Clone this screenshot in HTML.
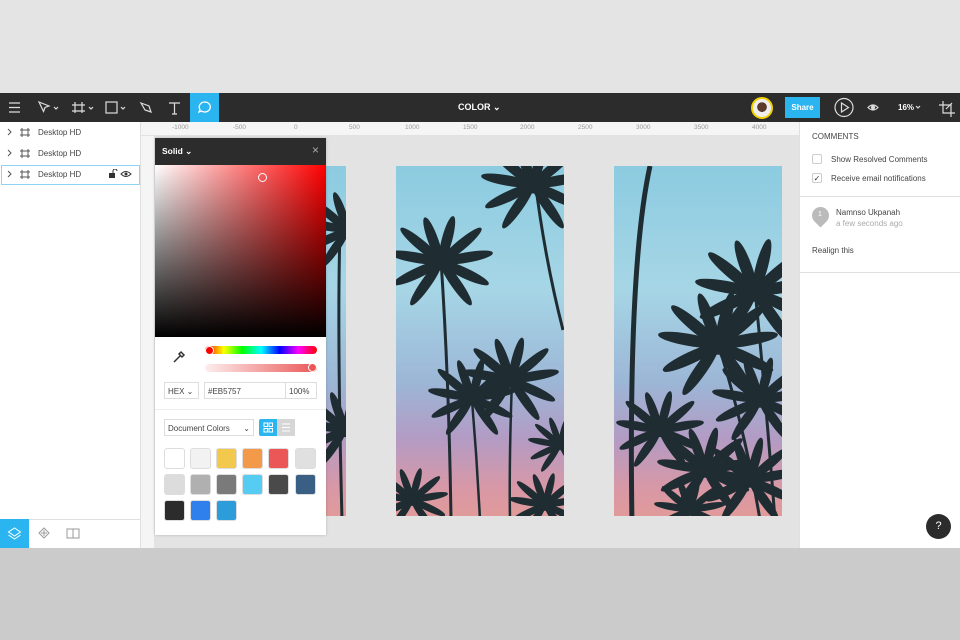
<!DOCTYPE html><html><head><style>
*{margin:0;padding:0;box-sizing:border-box}
body{width:960px;height:640px;overflow:hidden;font-family:"Liberation Sans",sans-serif;background:#e3e3e3;position:relative;font-size:8px;color:#333}
.a{position:absolute}
.photo{background:linear-gradient(180deg,#8ccbe0 0%,#a6d6e6 35%,#9cb6d6 62%,#b39bc4 78%,#d898a6 92%,#e09a9a 100%);overflow:hidden}
.swt{position:absolute;width:21px;height:21px;border-radius:3px;border:1px solid #ddd}
.t{font-size:8px;color:#444}
</style></head><body>
<div class="a" style="left:0;top:0;width:960px;height:93px;background:#e4e4e4"></div>
<div class="a" style="left:0;top:548px;width:960px;height:92px;background:#cbcbcb"></div>
<div class="a" style="left:0;top:93px;width:960px;height:29px;background:#2c2c2c"></div>
<svg class="a" style="left:0;top:93px" width="230" height="29">
<g stroke="#ddd" stroke-width="1.2" fill="none">
<path d="M9 10h11M9 14.5h11M9 19h11"/>
<path d="M39 9l10 4-4 1.5-1.5 4z"/><path d="M54 14l2 2 2-2"/>
<path d="M75 9v11M82 9v11M72 12h13M72 18h13"/><path d="M89 14l2 2 2-2"/>
<rect x="106" y="9" width="11" height="11"/><path d="M121 14l2 2 2-2"/>
<path d="M141 10l8 3 2 6-6-2z"/>
<path d="M169 10h11M174.5 10v11M172 21h5"/>
</g>
<rect x="190" y="0" width="29" height="29" fill="#2bb5f0"/>
<path d="M204.5 9a5.5 5 0 1 1-3 9l-2.5 1 1-2.5a5.5 5 0 0 1 4.5-7.5z" stroke="#fff" stroke-width="1.3" fill="none"/>
</svg>
<div class="a" style="left:458px;top:102px;color:#fff;font-size:9px;font-weight:bold">COLOR ⌄</div>
<div class="a" style="left:751px;top:97px;width:22px;height:22px;border-radius:50%;border:2px solid #f2d000;background:radial-gradient(circle at 50% 45%,#5a3a2a 35%,#eee 37%)"></div>
<div class="a" style="left:785px;top:97px;width:35px;height:21px;background:#2bb5f0;color:#fff;font-size:8px;line-height:21px;text-align:center;font-weight:bold">Share</div>
<svg class="a" style="left:830px;top:93px" width="130" height="29"><g stroke="#ddd" stroke-width="1.2" fill="none"><circle cx="14" cy="14.5" r="9"/><path d="M11.5 10v9l7-4.5z"/><path d="M38 14.5q5-5 10 0q-5 5-10 0z"/><circle cx="43" cy="14.5" r="1.5" fill="#ddd"/><path d="M86 13l2 2 2-2"/><path d="M113 8v12h12M109 12h12v12M116 16l6-6"/></g></svg>
<div class="a" style="left:898px;top:103px;color:#fff;font-size:8px;font-weight:bold">16%</div>
<div class="a" style="left:0;top:122px;width:141px;height:426px;background:#fff;border-right:1px solid #e0e0e0"></div>
<svg class="a" style="left:0;top:122px" width="40" height="70"><g stroke="#555" fill="none" stroke-width="1"><path d="M8 7l3 3-3 3M8 28l3 3-3 3M8 49l3 3-3 3"/><path d="M22 6v9M28 6v9M20 8h10M20 13h10M22 27v9M28 27v9M20 29h10M20 34h10M22 48v9M28 48v9M20 50h10M20 55h10"/></g></svg>
<div class="a t" style="left:38px;top:128px">Desktop HD</div>
<div class="a t" style="left:38px;top:149px">Desktop HD</div>
<div class="a" style="left:1px;top:165px;width:139px;height:20px;border:1px solid #8fd3f3"></div>
<div class="a t" style="left:38px;top:170px">Desktop HD</div>
<svg class="a" style="left:108px;top:169px" width="24" height="10"><rect x="1" y="4" width="6" height="5" fill="#333"/><path d="M5 4V2a2 2 0 0 1 4 0" stroke="#333" fill="none"/><path d="M13 5q5-5 10 0q-5 5-10 0z" stroke="#333" fill="none"/><circle cx="18" cy="5" r="1.5" fill="#333"/></svg>
<div class="a" style="left:0;top:519px;width:141px;height:1px;background:#e0e0e0"></div>
<div class="a" style="left:0;top:519px;width:29px;height:29px;background:#2bb5f0"></div>
<svg class="a" style="left:0;top:519px" width="90" height="29"><path d="M14.5 9l6 4-6 4-6-4z M8.5 16l6 4 6-4" stroke="#fff" fill="none"/><path d="M44 9l5 5-5 5-5-5zM41 14h6M44 11v6" stroke="#999" fill="none"/><path d="M67 10h6v9h-6zM73 10h6v9h-6" stroke="#999" fill="none"/></svg>
<div class="a" style="left:141px;top:122px;width:658px;height:14px;background:#f5f5f5;border-bottom:1px solid #e2e2e2"></div>
<div class="a" style="left:141px;top:136px;width:14px;height:412px;background:#f5f5f5;border-right:1px solid #e2e2e2"></div>
<div class="a" style="top:124px;left:0;font-size:6.5px;color:#999;width:800px">
<span class="a" style="left:172px">-1000</span><span class="a" style="left:233px">-500</span><span class="a" style="left:294px">0</span><span class="a" style="left:349px">500</span><span class="a" style="left:405px">1000</span><span class="a" style="left:463px">1500</span><span class="a" style="left:520px">2000</span><span class="a" style="left:578px">2500</span><span class="a" style="left:636px">3000</span><span class="a" style="left:694px">3500</span><span class="a" style="left:752px">4000</span></div>
<div class="a photo" style="left:326px;top:166px;width:20px;height:350px"></div>
<div class="a photo" style="left:396px;top:166px;width:168px;height:350px"></div>
<div class="a photo" style="left:614px;top:166px;width:168px;height:350px"></div>
<svg class="a" style="left:0;top:0" width="960" height="640">
<defs>
<clipPath id="c1"><rect x="326" y="166" width="20" height="350"/><rect x="396" y="166" width="168" height="350"/><rect x="614" y="166" width="168" height="350"/></clipPath>
<g id="cr" fill="#1f2d33">
<ellipse cx="20" cy="0" rx="20" ry="3.5" transform="rotate(-170)"/>
<ellipse cx="20" cy="0" rx="20" ry="3.5" transform="rotate(-140)"/>
<ellipse cx="18" cy="0" rx="18" ry="3.5" transform="rotate(-110)"/>
<ellipse cx="18" cy="0" rx="18" ry="3.5" transform="rotate(-75)"/>
<ellipse cx="20" cy="0" rx="20" ry="3.5" transform="rotate(-40)"/>
<ellipse cx="20" cy="0" rx="20" ry="3.5" transform="rotate(-10)"/>
<ellipse cx="20" cy="0" rx="20" ry="3.5" transform="rotate(25)"/>
<ellipse cx="20" cy="0" rx="20" ry="3.5" transform="rotate(55)"/>
<ellipse cx="20" cy="0" rx="20" ry="3.5" transform="rotate(125)"/>
<ellipse cx="20" cy="0" rx="20" ry="3.5" transform="rotate(155)"/>
<circle r="6"/>
</g>
</defs>
<g clip-path="url(#c1)" stroke="#1f2d33" fill="none">
<path d="M340 230q-3 100 2 290" stroke-width="3"/>
<use href="#cr" transform="translate(348,230) scale(1.1)"/>
<use href="#cr" transform="translate(345,430) scale(1.1)"/>
<path d="M441 260q8 120 10 260" stroke-width="3"/>
<use href="#cr" transform="translate(441,262) scale(1.3)"/>
<path d="M535 180q10 80 28 150" stroke-width="3"/>
<use href="#cr" transform="translate(533,185) scale(1.3)"/>
<path d="M512 380q-3 80 -2 140" stroke-width="2.5"/>
<use href="#cr" transform="translate(511,380) scale(1.2)"/>
<path d="M472 400q5 60 8 120" stroke-width="2.5"/>
<use href="#cr" transform="translate(472,398) scale(1.1)"/>
<use href="#cr" transform="translate(412,500) scale(0.9)"/>
<use href="#cr" transform="translate(545,505) scale(0.9)"/>
<use href="#cr" transform="translate(560,445) scale(0.8)"/>
<path d="M650 166q-22 100 -18 360" stroke-width="5"/>
<path d="M720 350q25 80 40 170" stroke-width="3"/>
<use href="#cr" transform="translate(718,345) scale(1.5)"/>
<path d="M755 290q10 100 20 230" stroke-width="3"/>
<use href="#cr" transform="translate(755,292) scale(1.5)"/>
<use href="#cr" transform="translate(660,430) scale(1.1)"/>
<use href="#cr" transform="translate(705,470) scale(1.2)"/>
<use href="#cr" transform="translate(760,400) scale(1.2)"/>
<use href="#cr" transform="translate(750,480) scale(1.2)"/>
<use href="#cr" transform="translate(690,510) scale(0.9)"/>
</g></svg>
<div class="a" style="left:155px;top:138px;width:171px;height:397px;background:#fff;box-shadow:0 0 3px rgba(0,0,0,.2)"></div>
<div class="a" style="left:155px;top:138px;width:171px;height:27px;background:#2c2c2c;color:#fff;font-weight:bold;font-size:8.5px;padding:8px 7px">Solid ⌄<span style="float:right;font-weight:normal;font-size:12px;margin-top:-3px;color:#aaa">×</span></div>
<div class="a" style="left:155px;top:165px;width:171px;height:172px;background:linear-gradient(to top,#000,rgba(0,0,0,0)),linear-gradient(to right,#fff,#f00)"></div>
<div class="a" style="left:258px;top:173px;width:9px;height:9px;border:1.5px solid #fff;border-radius:50%"></div>
<svg class="a" style="left:172px;top:350px" width="14" height="14"><path d="M2 12l6-6M7 4l3 3M9 2l3 3-2 2-3-3z" stroke="#333" stroke-width="1.5" fill="none"/></svg>
<div class="a" style="left:205px;top:346px;width:112px;height:8px;border-radius:4px;background:linear-gradient(to right,#f00,#ff0,#0f0,#0ff,#00f,#f0f,#f00)"></div>
<div class="a" style="left:205px;top:346px;width:9px;height:9px;border-radius:50%;background:#f00;border:1.5px solid #fff"></div>
<div class="a" style="left:205px;top:364px;width:112px;height:8px;border-radius:4px;background:linear-gradient(to right,rgba(235,87,87,.1),#eb5757)"></div>
<div class="a" style="left:308px;top:363px;width:9px;height:9px;border-radius:50%;background:#eb5757;border:1.5px solid #fff"></div>
<div class="a t" style="left:164px;top:382px;width:35px;height:17px;border:1px solid #ddd;padding:4px 3px">HEX ⌄</div>
<div class="a t" style="left:204px;top:382px;width:113px;height:17px;border:1px solid #ddd;padding:4px 3px">#EB5757<span style="position:absolute;left:80px;top:0;height:15px;border-left:1px solid #ddd;padding:4px 3px">100%</span></div>
<div class="a" style="left:155px;top:409px;width:171px;height:1px;background:#eee"></div>
<div class="a t" style="left:164px;top:419px;width:90px;height:17px;border:1px solid #ddd;padding:4px 3px">Document Colors <span style="float:right">⌄</span></div>
<div class="a" style="left:259px;top:419px;width:18px;height:17px;background:#2bb5f0;border-radius:2px 0 0 2px"></div>
<div class="a" style="left:277px;top:419px;width:18px;height:17px;background:#d6d6d6"></div>
<svg class="a" style="left:259px;top:419px" width="36" height="17"><g stroke="#fff" fill="none"><rect x="5" y="4" width="3.5" height="3.5"/><rect x="10" y="4" width="3.5" height="3.5"/><rect x="5" y="9.5" width="3.5" height="3.5"/><rect x="10" y="9.5" width="3.5" height="3.5"/><path d="M23 5h8M23 8.5h8M23 12h8"/></g><path d="M44 4h8M48 13V6M45 9l3-3 3 3" stroke="#444" fill="none"/></svg>
<div class="swt" style="left:164px;top:448px;background:#fff"></div>
<div class="swt" style="left:190px;top:448px;background:#f2f2f2"></div>
<div class="swt" style="left:216px;top:448px;background:#f2c94c"></div>
<div class="swt" style="left:242px;top:448px;background:#f2994a"></div>
<div class="swt" style="left:268px;top:448px;background:#eb5757"></div>
<div class="swt" style="left:295px;top:448px;background:#e0e0e0"></div>
<div class="swt" style="left:164px;top:474px;background:#dcdcdc"></div>
<div class="swt" style="left:190px;top:474px;background:#b0b0b0"></div>
<div class="swt" style="left:216px;top:474px;background:#7a7a7a"></div>
<div class="swt" style="left:242px;top:474px;background:#56ccf2"></div>
<div class="swt" style="left:268px;top:474px;background:#4a4a4a"></div>
<div class="swt" style="left:295px;top:474px;background:#3a5f85"></div>
<div class="swt" style="left:164px;top:500px;background:#2c2c2c"></div>
<div class="swt" style="left:190px;top:500px;background:#2f80ed"></div>
<div class="swt" style="left:216px;top:500px;background:#2d9cdb"></div>
<div class="a" style="left:799px;top:122px;width:161px;height:426px;background:#fff;border-left:1px solid #e0e0e0"></div>
<div class="a t" style="left:812px;top:132px">COMMENTS</div>
<div class="a" style="left:812px;top:154px;width:10px;height:10px;border:1px solid #ccc;border-radius:2px"></div>
<div class="a t" style="left:831px;top:155px">Show Resolved Comments</div>
<div class="a" style="left:812px;top:173px;width:10px;height:10px;border:1px solid #ccc;border-radius:2px;font-size:8px;line-height:9px;text-align:center">✓</div>
<div class="a t" style="left:831px;top:174px">Receive email notifications</div>
<div class="a" style="left:800px;top:196px;width:160px;height:1px;background:#e0e0e0"></div>
<div class="a" style="left:812px;top:207px;width:17px;height:17px;border-radius:50% 50% 50% 0;transform:rotate(-45deg);background:#bbb"></div>
<div class="a" style="left:818px;top:211px;color:#fff;font-size:7px">1</div>
<div class="a t" style="left:836px;top:208px">Namnso Ukpanah</div>
<div class="a" style="left:836px;top:219px;font-size:8px;color:#aaa">a few seconds ago</div>
<div class="a t" style="left:812px;top:246px">Realign this</div>
<div class="a" style="left:800px;top:272px;width:160px;height:1px;background:#e0e0e0"></div>
<div class="a" style="left:926px;top:514px;width:25px;height:25px;border-radius:50%;background:#2c2c2c;color:#fff;text-align:center;line-height:25px;font-size:11px">?</div>
</body></html>
